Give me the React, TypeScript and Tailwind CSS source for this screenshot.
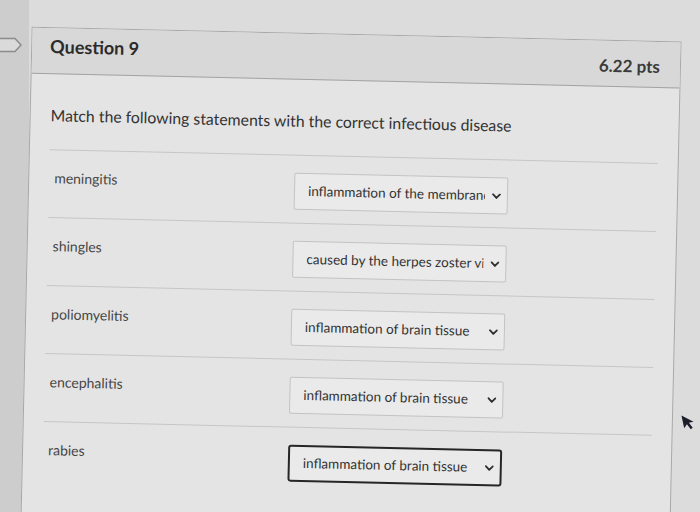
import React from 'react';

type Row = { term: string; answer: string; focused?: boolean };

const rows: Row[] = [
  { term: 'meningitis', answer: 'inflammation of the membrane' },
  { term: 'shingles', answer: 'caused by the herpes zoster virus' },
  { term: 'poliomyelitis', answer: 'inflammation of brain tissue' },
  { term: 'encephalitis', answer: 'inflammation of brain tissue' },
  { term: 'rabies', answer: 'inflammation of brain tissue', focused: true },
];

const Chevron = () => (
  <svg width="9" height="6" viewBox="0 0 9 6" className="absolute right-[6px] top-1/2 -translate-y-1/2">
    <polyline points="1,1 4.5,4.7 8,1" fill="none" stroke="#2f2f2f" strokeWidth="1.8" strokeLinecap="round" strokeLinejoin="round" />
  </svg>
);

const FakeSelect: React.FC<{ value: string; focused?: boolean }> = ({ value, focused }) => (
  <div
    className={`relative h-[37px] w-[214px] flex items-center pl-[13px] pr-[22px] bg-[#eaeaea] ${
      focused ? 'border-2 border-[#262626] rounded-[3px]' : 'border border-[#c3c3c3] rounded-[2px]'
    }`}
  >
    <span className="min-w-0 flex-1 overflow-hidden whitespace-nowrap text-[13.5px] text-[#333]">{value}</span>
    <Chevron />
  </div>
);

export default function App() {
  return (
    <div className="flex h-[512px] w-[700px] overflow-hidden bg-[#dcdcdc] font-['Lato','Liberation_Sans',sans-serif]">
      {/* left strip with the question flag */}
      <div className="w-[29px] shrink-0 bg-[#cdcdcd] pt-[37px]">
        <svg width="24" height="16" viewBox="0 0 24 16">
          <path d="M-4 1.5 H15 L21 8 L15 14.5 H-4 Z" fill="#dadada" stroke="#8c8c8c" strokeWidth="1.5" strokeLinejoin="round" />
        </svg>
      </div>

      <div className="relative flex-1">
        <div className="-ml-[3px] mt-[34px] w-[650px] rotate-[1.3deg] border border-[#a8a8a8] bg-[#e4e4e4]">
          {/* header */}
          <div className="flex h-[46px] items-start justify-between border-b border-[#a3a3a3] bg-[#d8d8d8] pl-[18px] pr-[20px]">
            <h3 className="pt-[6px] text-[18px] leading-[24px] font-bold text-[#2b2b2b]">Question 9</h3>
            <span className="pt-[14px] text-[17px] leading-[22px] font-bold text-[#3a3a3a]">6.22 pts</span>
          </div>

          {/* body */}
          <div className="px-[20px] pt-[30px] pb-[30px]">
            <p className="mb-[23px] text-[15.8px] leading-[22px] text-[#333]">
              Match the following statements with the correct infectious disease
            </p>

            {rows.map(r => (
              <div key={r.term} className="flex h-[68px] border-t border-[#c6c6c6] pt-[17px]">
                <div className="w-[245px] shrink-0 pl-[5px] pt-[1px] text-[14px] leading-[20px] text-[#464646]">{r.term}</div>
                <FakeSelect value={r.answer} focused={r.focused} />
              </div>
            ))}
          </div>
        </div>

        {/* mouse pointer */}
        <svg width="14" height="18" viewBox="0 0 14 18" className="absolute left-[653px] top-[413px] -rotate-[12deg]">
          <path d="M1 1 L1 14 L4.5 10.8 L7.2 16.5 L9.4 15.5 L6.8 9.8 L11.5 9.6 Z" fill="#1c1f2b" />
        </svg>
      </div>
    </div>
  );
}
